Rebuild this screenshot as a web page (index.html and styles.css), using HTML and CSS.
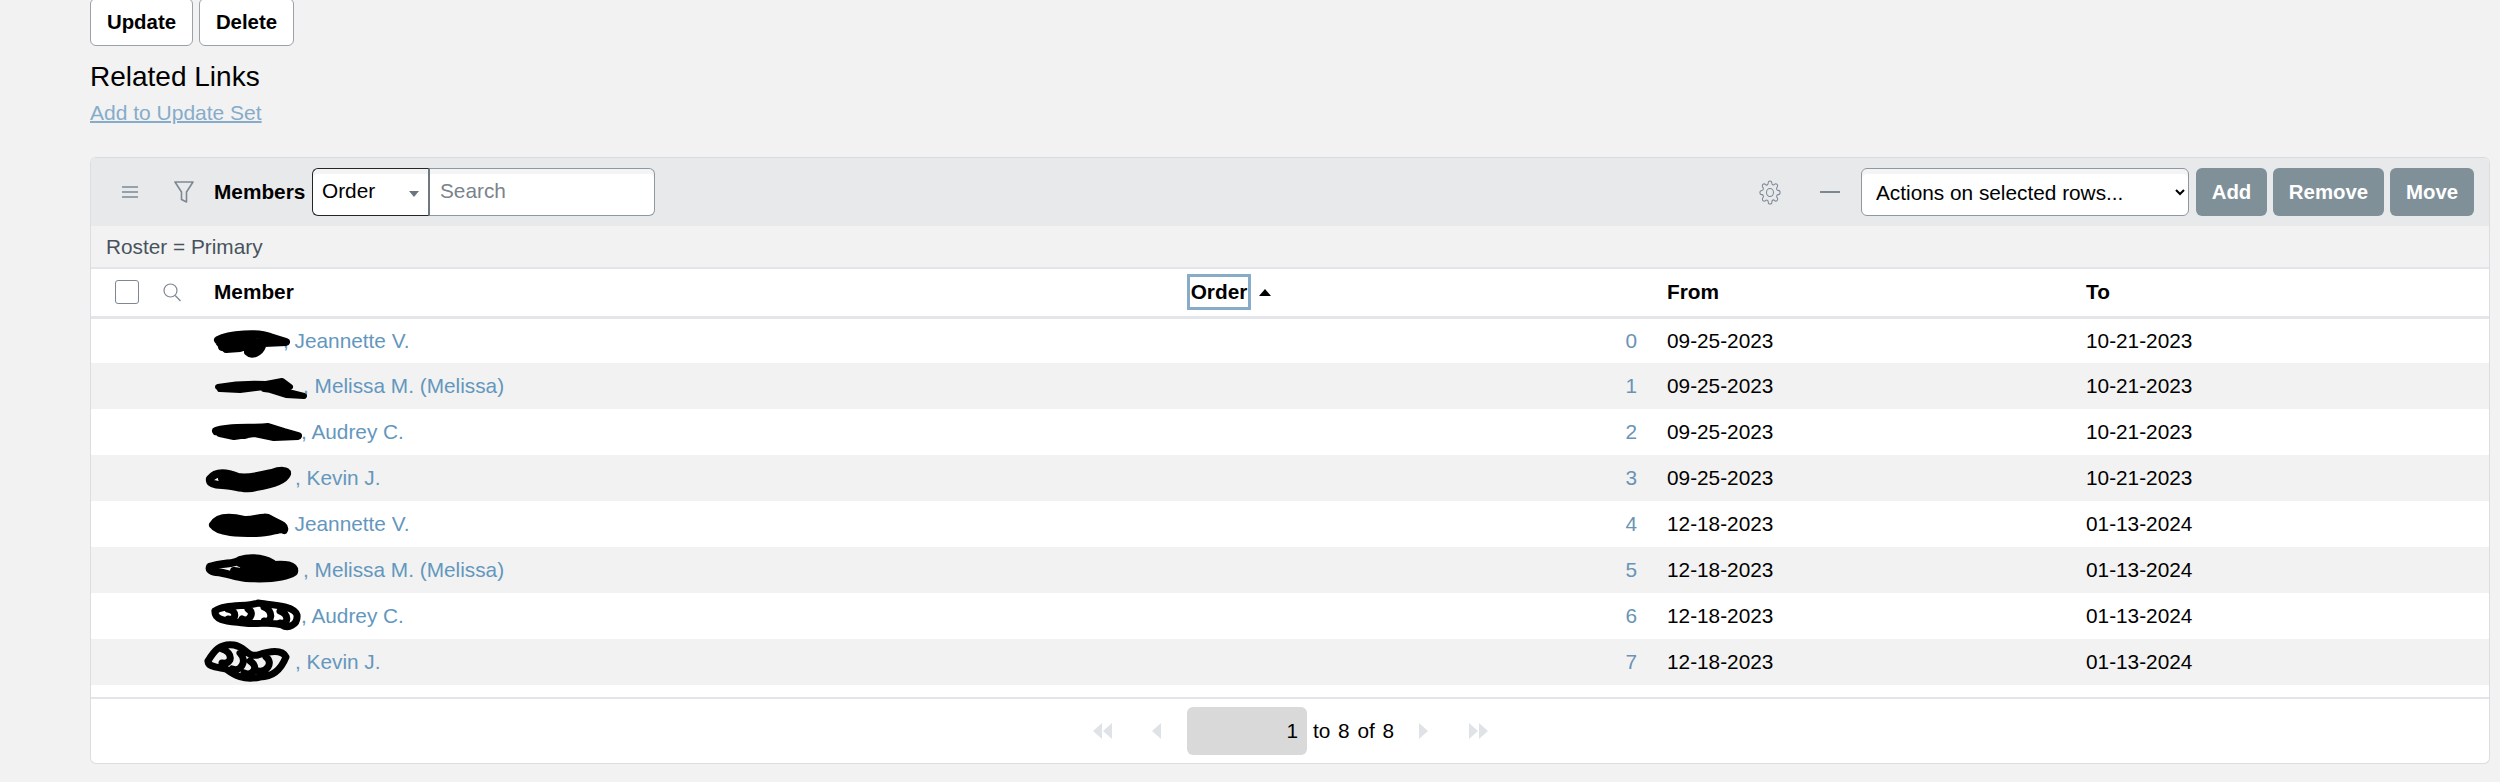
FILE: index.html
```html
<!DOCTYPE html>
<html lang="en">
<head>
<meta charset="utf-8">
<title>Members</title>
<link rel="stylesheet" href="styles.css">
</head>
<body>
<main class="page">
  <div class="actions">
    <button class="btn btn-update">Update</button>
    <button class="btn btn-delete">Delete</button>
  </div>
  <h2 class="related-title">Related Links</h2>
  <a class="related-link" href="#">Add to Update Set</a>

  <section class="panel">
    <header class="toolbar">
      <svg class="ico-menu" width="16" height="12" viewBox="0 0 16 12"><path d="M0 1h16M0 6h16M0 11h16" stroke="#7d8894" stroke-width="1.6" fill="none"/></svg>
      <svg class="ico-filter" width="20" height="23" viewBox="0 0 20 23"><path d="M1 1h18l-6.500 10v10l-5-2.500v-7.500z" stroke="#7d8894" stroke-width="1.6" fill="none" stroke-linejoin="round"/></svg>
      <span class="list-title">Members</span>
      <div class="search-group">
        <div class="field-select"><span class="field-select-text">Order</span></div>
        <input class="search-input" type="text" placeholder="Search">
      </div>
      <svg class="ico-gear" width="22" height="25" viewBox="0 0 24 24" preserveAspectRatio="none"><circle cx="12" cy="12" r="3.8" stroke="#7d8894" stroke-width="1.1" fill="none"/><path d="M19.4 15a1.65 1.65 0 0 0 .33 1.82l.06.06a2 2 0 0 1 0 2.83 2 2 0 0 1-2.83 0l-.06-.06a1.65 1.65 0 0 0-1.82-.33 1.65 1.65 0 0 0-1 1.51V21a2 2 0 0 1-2 2 2 2 0 0 1-2-2v-.09A1.65 1.65 0 0 0 9 19.4a1.65 1.65 0 0 0-1.82.33l-.06.06a2 2 0 0 1-2.83 0 2 2 0 0 1 0-2.83l.06-.06a1.65 1.65 0 0 0 .33-1.82 1.65 1.65 0 0 0-1.51-1H3a2 2 0 0 1-2-2 2 2 0 0 1 2-2h.09A1.65 1.65 0 0 0 4.6 9a1.65 1.65 0 0 0-.33-1.82l-.06-.06a2 2 0 0 1 0-2.83 2 2 0 0 1 2.83 0l.06.06a1.65 1.65 0 0 0 1.82.33H9a1.65 1.65 0 0 0 1-1.51V3a2 2 0 0 1 2-2 2 2 0 0 1 2 2v.09a1.65 1.65 0 0 0 1 1.51 1.65 1.65 0 0 0 1.82-.33l.06-.06a2 2 0 0 1 2.83 0 2 2 0 0 1 0 2.83l-.06.06a1.65 1.65 0 0 0-.33 1.82V9a1.65 1.65 0 0 0 1.51 1H21a2 2 0 0 1 2 2 2 2 0 0 1-2 2h-.09a1.65 1.65 0 0 0-1.51 1z" stroke="#7d8894" stroke-width="1.1" fill="none"/></svg>
      <span class="ico-dash"></span>
      <select class="actions-select"><option>Actions on selected rows...</option></select>
      <button class="tool-btn tool-add">Add</button>
      <button class="tool-btn tool-remove">Remove</button>
      <button class="tool-btn tool-move">Move</button>
    </header>
    <div class="breadcrumb">Roster = Primary</div>
    <table class="grid">
      <colgroup><col class="c-check"><col class="c-search"><col class="c-member"><col class="c-order"><col class="c-from"><col class="c-to"></colgroup>
      <thead>
        <tr>
          <th class="th-check"><span class="checkbox"></span></th>
          <th class="th-search"><svg width="18" height="19" viewBox="0 0 18 19"><circle cx="7.5" cy="7.5" r="6.5" stroke="#7d8894" stroke-width="1.2" fill="none"/><path d="M12.2 12.5L17.5 18" stroke="#7d8894" stroke-width="1.3" fill="none"/></svg></th>
          <th>Member</th>
          <th><span class="sort-focus">Order</span><span class="sort-arrow"></span></th>
          <th>From</th>
          <th>To</th>
        </tr>
      </thead>
      <tbody>
        <tr><td></td><td></td><td class="member"><a href="#"><span class="hide w1"></span>, Jeannette V.</a>
          <svg class="scribble" width="110" height="46" viewBox="0 0 110 46"><path d="M14 21C25 15 55 13 66 18L82 23 60 24 35 22 20 25M18 28C30 24 45 26 58 27 56 33 48 37 44 33 46 28 52 28 56 30M16 24L22 30 36 29 50 25" /></svg></td><td class="num"><a href="#">0</a></td><td>09-25-2023</td><td>10-21-2023</td></tr>
        <tr><td></td><td></td><td class="member"><a href="#"><span class="hide w2"></span>, Melissa M. (Melissa)</a>
          <svg class="scribble thin" width="110" height="46" viewBox="0 0 110 46"><path d="M14 24C30 21 45 20 62 21L78 18 86 24 60 24 36 27 16 26M60 26L76 28 88 30 100 33 82 32 66 27M30 24L60 23" /></svg></td><td class="num"><a href="#">1</a></td><td>09-25-2023</td><td>10-21-2023</td></tr>
        <tr><td></td><td></td><td class="member"><a href="#"><span class="hide w3"></span>, Audrey C.</a>
          <svg class="scribble" width="110" height="46" viewBox="0 0 110 46"><path d="M12 22C25 17 50 20 64 18L80 23 94 27 70 28 50 24 30 27 16 24M24 20L40 26 60 21 76 26M30 22L56 24" /></svg></td><td class="num"><a href="#">2</a></td><td>09-25-2023</td><td>10-21-2023</td></tr>
        <tr><td></td><td></td><td class="member"><a href="#"><span class="hide w4"></span>, Kevin J.</a>
          <svg class="scribble" width="110" height="46" viewBox="0 0 110 46"><path d="M6 24C12 16 24 18 34 22 46 24 56 20 68 18 76 15 84 15 83 19 80 26 66 30 52 32 42 36 30 30 18 30 10 30 5 28 6 24M18 23L44 28 68 24M26 27L50 24 76 20" /></svg></td><td class="num"><a href="#">3</a></td><td>09-25-2023</td><td>10-21-2023</td></tr>
        <tr><td></td><td></td><td class="member"><a href="#"><span class="hide w1"></span>, Jeannette V.</a>
          <svg class="scribble" width="110" height="46" viewBox="0 0 110 46"><path d="M9 24C14 15 28 16 40 19 50 20 60 14 66 18 72 22 82 24 80 29 76 26 68 32 52 32 36 32 14 32 9 24M16 24L46 26 70 24M24 20L40 29 60 22" /></svg></td><td class="num"><a href="#">4</a></td><td>12-18-2023</td><td>01-13-2024</td></tr>
        <tr><td></td><td></td><td class="member"><a href="#"><span class="hide w2"></span>, Melissa M. (Melissa)</a>
          <svg class="scribble" width="110" height="46" viewBox="0 0 110 46"><path d="M6 20C20 15 30 18 36 13 48 9 64 12 70 18 80 17 92 18 90 25 80 32 60 32 42 31 30 30 24 26 12 25 6 24 5 22 6 20M36 16L60 20 84 24M30 24L60 28 78 22M44 18L52 30M40 22L70 24" /></svg></td><td class="num"><a href="#">5</a></td><td>12-18-2023</td><td>01-13-2024</td></tr>
        <tr><td></td><td></td><td class="member"><a href="#"><span class="hide w3"></span>, Audrey C.</a>
          <svg class="scribble dense" width="110" height="46" viewBox="0 0 110 46"><path d="M11 18C20 11 44 14 54 10 66 12 90 12 93 22 94 32 84 36 78 32 66 28 54 32 40 30 24 28 10 28 11 18M24 16C34 18 32 28 24 26M44 16C52 20 44 30 38 26M60 14C70 18 68 30 60 28M76 18C86 22 84 32 76 30" /></svg></td><td class="num"><a href="#">6</a></td><td>12-18-2023</td><td>01-13-2024</td></tr>
        <tr><td></td><td></td><td class="member"><a href="#"><span class="hide w4"></span>, Kevin J.</a>
          <svg class="scribble dense" width="110" height="46" viewBox="0 0 110 46"><path d="M4 22C10 12 16 4 30 6 42 8 42 18 54 16 66 12 78 10 82 18 78 28 70 38 56 38 40 42 30 36 22 30 12 28 4 28 4 22M18 10C30 14 28 26 18 24M36 14C44 22 36 34 28 30M46 22C56 28 48 38 40 34M62 18C70 24 62 34 54 32" /></svg></td><td class="num"><a href="#">7</a></td><td>12-18-2023</td><td>01-13-2024</td></tr>
      </tbody>
    </table>
    <footer class="pager">
      <svg class="pg-first" width="19" height="16" viewBox="0 0 19 16"><path d="M9 0v16L0 8zM19 0v16L10 8z" fill="#dfe3e7"/></svg>
      <svg class="pg-prev" width="9" height="16" viewBox="0 0 9 16"><path d="M9 0v16L0 8z" fill="#dfe3e7"/></svg>
      <span class="pg-input">1</span>
      <span class="pg-text">to 8 of 8</span>
      <svg class="pg-next" width="9" height="16" viewBox="0 0 9 16"><path d="M0 0v16l9-8z" fill="#dfe3e7"/></svg>
      <svg class="pg-last" width="19" height="16" viewBox="0 0 19 16"><path d="M0 0v16l9-8zM10 0v16l9-8z" fill="#dfe3e7"/></svg>
    </footer>
  </section>
</main>
</body>
</html>
```
FILE: styles.css
```css
* { box-sizing: border-box; }
html, body { margin: 0; padding: 0; height: 782px; overflow: hidden; }
body { background: #f2f2f2; color: #000; font-family: "Liberation Sans", Arial, sans-serif; font-size: 20.8px; }
.page { padding: 0 10px 0 90px; }

.actions { display: flex; gap: 6px; margin-top: -2px; height: 48px; }
.btn { height: 48px; background: #fff; border: 1px solid #9aa1a9; border-radius: 6px; font: bold 20.4px "Liberation Sans", Arial, sans-serif; color: #000; padding: 0; }
.btn-update { width: 103px; }
.btn-delete { width: 95px; }

.related-title { margin: 15px 0 0; font-size: 28px; line-height: 32px; font-weight: 400; }
.related-link { display: block; margin-top: 8px; width: max-content; font-size: 21px; line-height: 24px; color: #86acca; text-decoration: underline; text-decoration-thickness: 2px; }

.panel { margin-top: 32px; width: 2400px; height: 607px; background: #fff; border: 1px solid #dcdde0; border-top-color: #d9dadd; border-radius: 6px; overflow: hidden; }

.toolbar { display: flex; align-items: center; height: 68px; background: #e8e9eb; padding: 0 15px 0 31px; }
.ico-menu { flex: none; }
.ico-filter { flex: none; margin-left: 36px; }
.list-title { margin-left: 20px; font-weight: 700; width: 97px; }
.search-group { display: flex; height: 48px; width: 343px; margin-left: 1px; }
.field-select { position: relative; width: 118px; background: #fff; border: 1px solid #22262b; border-right: 2px solid #6f7780; border-radius: 6px 0 0 6px; box-shadow: inset 0 5px 0 #f4f4f4; display: flex; align-items: center; padding: 0 0 2px 9px; }
.field-select::after { content: ""; position: absolute; right: 9px; top: 22px; border: 5px solid transparent; border-top: 6px solid #6b7580; border-bottom: 0; }
.search-input { flex: 1; min-width: 0; background: #fff; border: 1px solid #8f97a0; border-left: 0; border-radius: 0 6px 6px 0; box-shadow: inset 0 5px 0 #f4f4f4; font: 20.8px "Liberation Sans", Arial, sans-serif; padding: 0 0 2px 10px; color: #000; outline: none; }
.search-input::placeholder { color: #7b838c; opacity: 1; }
.ico-gear { flex: none; margin-left: auto; }
.ico-dash { flex: none; width: 20px; height: 2px; margin-left: 39px; background: #7d8894; }
.actions-select { flex: none; margin-left: 21px; width: 328px; height: 48px; background: #fff; border: 1px solid #8f97a0; border-radius: 6px; box-shadow: inset 0 5px 0 #f4f4f4; font: 20.8px "Liberation Sans", Arial, sans-serif; color: #000; padding-left: 10px; }
.tool-btn { flex: none; height: 48px; margin-left: 7px; padding: 0; border: 0; border-radius: 6px; background: #7f9099; color: #fff; font: bold 20.4px "Liberation Sans", Arial, sans-serif; }
.tool-add { width: 71px; }
.tool-remove { width: 111px; margin-left: 6px; }
.tool-move { width: 84px; margin-left: 6px; }

.breadcrumb { height: 43px; background: #f2f2f2; border-bottom: 2px solid #e4e5e9; padding: 0 0 0 15px; line-height: 41px; color: #48525e; font-size: 20.8px; }

.grid { width: 100%; border-collapse: collapse; table-layout: fixed; }
.c-check { width: 60px; }
.c-search { width: 53px; }
.c-member { width: 973px; }
.c-order { width: 480px; }
.c-from { width: 419px; }
.grid th { height: 48px; padding: 0 0 0 10px; text-align: left; font-weight: 700; border-bottom: 3px solid #e4e5e9; vertical-align: middle; }
.th-check { padding-left: 24px !important; }
.th-search { padding-left: 12px !important; }
.th-search svg { display: block; }
.checkbox { display: block; width: 24px; height: 24px; border: 1px solid #7d8894; border-radius: 3px; background: #fff; }
.sort-focus { display: inline-block; width: 64px; height: 36px; line-height: 30px; border: 3px solid #86acca; text-align: center; vertical-align: middle; }
.sort-arrow { display: inline-block; margin-left: 8px; vertical-align: middle; border: 6px solid transparent; border-bottom: 7px solid #000; border-top: 0; }
.grid td { height: 46px; padding: 0 0 0 10px; vertical-align: middle; }
.grid tbody tr:nth-child(even) { background: #f2f2f2; }
.grid a { color: #6497bd; text-decoration: none; }
.member { position: relative; }
.hide { display: inline-block; }
.w1 { width: 69px; }
.w2 { width: 89px; }
.w3 { width: 87px; }
.w4 { width: 81px; }
.scribble { position: absolute; left: 0; top: 0; fill: none; stroke: #000; stroke-width: 8; stroke-linejoin: round; stroke-linecap: round; }
.scribble.thin { stroke-width: 6; }
.scribble.dense { stroke-width: 7; }
.grid td.num { text-align: right; padding: 0 20px 0 0; }
.grid td.num a { color: #6a93b5; }

.pager { display: flex; align-items: center; height: 67px; margin-top: 12px; padding: 0 0 2px 1002px; border-top: 2px solid #e4e5e9; }
.pg-first, .pg-prev, .pg-next, .pg-last { flex: none; }
.pg-prev { margin-left: 40px; }
.pg-input { margin-left: 26px; width: 120px; height: 48px; line-height: 48px; background: #d9d9d9; border-radius: 6px; text-align: right; padding-right: 9px; }
.pg-text { margin-left: 6px; width: 106px; word-spacing: 2px; white-space: nowrap; }
.pg-last { margin-left: 41px; }
```
